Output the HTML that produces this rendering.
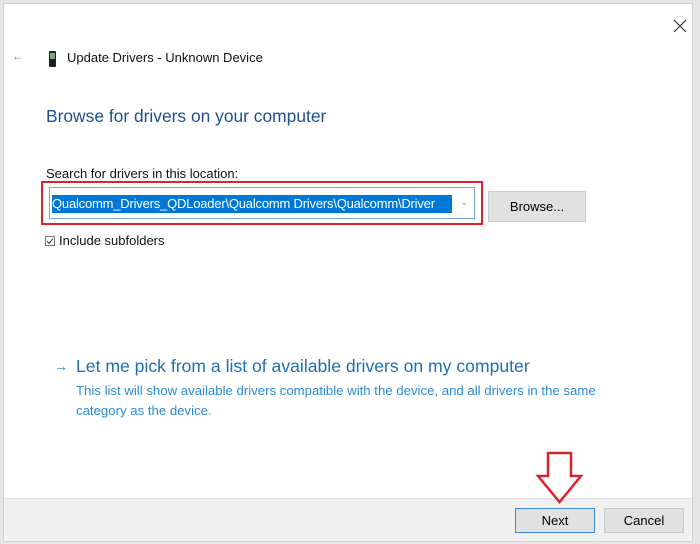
<!DOCTYPE html>
<html><head><style>
body{margin:0;width:700px;height:544px;background:#e6e6e6;position:relative;overflow:hidden;font-family:"Liberation Sans",sans-serif}
.win{position:absolute;left:3px;top:3px;width:690px;height:539px;background:#fff;border:1px solid #d4d4d4;box-sizing:border-box}
.t{position:absolute;white-space:nowrap}
.bar{position:absolute;left:0;right:0;top:494px;bottom:0;background:#f0f0f0;border-top:1px solid #dfdfdf}
.btn{position:absolute;background:#e1e1e1;border:1px solid #adadad;box-sizing:border-box;font-size:13px;color:#000;text-align:center}
</style></head><body>
<div class="win">
<svg style="position:absolute;left:669px;top:15px" width="14" height="14"><path d="M1 1L13 13M13 1L1 13" stroke="#333" stroke-width="1.2"/></svg>
<div class="t" style="left:8px;top:45px;font-size:12px;color:#777">←</div>
<div style="position:absolute;left:45px;top:47px;width:7px;height:16px;background:#222;border-radius:1px"></div>
<div style="position:absolute;left:46px;top:49px;width:5px;height:6px;background:#7a7"></div>
<div class="t" style="left:63px;top:46px;font-size:13px;color:#111">Update Drivers - Unknown Device</div>
<div class="t" style="left:42px;top:102px;font-size:17.4px;color:#1d4f91">Browse for drivers on your computer</div>
<div class="t" style="left:42px;top:162px;font-size:13px;color:#111">Search for drivers in this location:</div>
<div style="position:absolute;left:37px;top:177px;width:442px;height:44px;border:2px solid #d9232d;box-sizing:border-box"></div>
<div style="position:absolute;left:45px;top:183px;width:426px;height:32px;border:1px solid #7aa7d8;box-sizing:border-box;background:#fff"></div>
<div class="t" style="left:48px;top:191px;height:18px;line-height:18px;width:400px;overflow:hidden;font-size:13px;background:#0078d7;color:#fff;letter-spacing:-0.2px">Qualcomm_Drivers_QDLoader\Qualcomm Drivers\Qualcomm\Driver</div>
<div class="t" style="left:456px;top:193px;font-size:10px;color:#999">⌄</div>
<div class="btn" style="left:484px;top:187px;width:98px;height:31px;line-height:29px;border-color:#ccc">Browse...</div>
<svg style="position:absolute;left:41px;top:232px" width="11" height="11"><rect x="0.5" y="0.5" width="9" height="9" fill="#fff" stroke="#777"/><path d="M2 5L4 7.5L8 2.5" fill="none" stroke="#333" stroke-width="1"/></svg>
<div class="t" style="left:55px;top:229px;font-size:13px;color:#111">Include subfolders</div>
<div class="t" style="left:50px;top:354px;font-size:14px;color:#1f7fc8">→</div>
<div class="t" style="left:72px;top:352px;font-size:17.6px;color:#1e6eb5">Let me pick from a list of available drivers on my computer</div>
<div class="t" style="left:72px;top:377px;font-size:13.2px;color:#2d8ad6;line-height:20px">This list will show available drivers compatible with the device, and all drivers in the same<br>category as the device.</div>
<div class="bar">
<div class="btn" style="left:511px;top:9px;width:80px;height:25px;line-height:23px;border:1px solid #3c8ad6">Next</div>
<div class="btn" style="left:600px;top:9px;width:80px;height:25px;line-height:23px;border-color:#ccc">Cancel</div>
</div>
<svg style="position:absolute;left:530px;top:447px" width="50" height="54"><path d="M14 2H37V25H47L25.5 51 4 25H14Z" fill="#fff" stroke="#d9232d" stroke-width="2.5"/></svg>
</div>
</body></html>
